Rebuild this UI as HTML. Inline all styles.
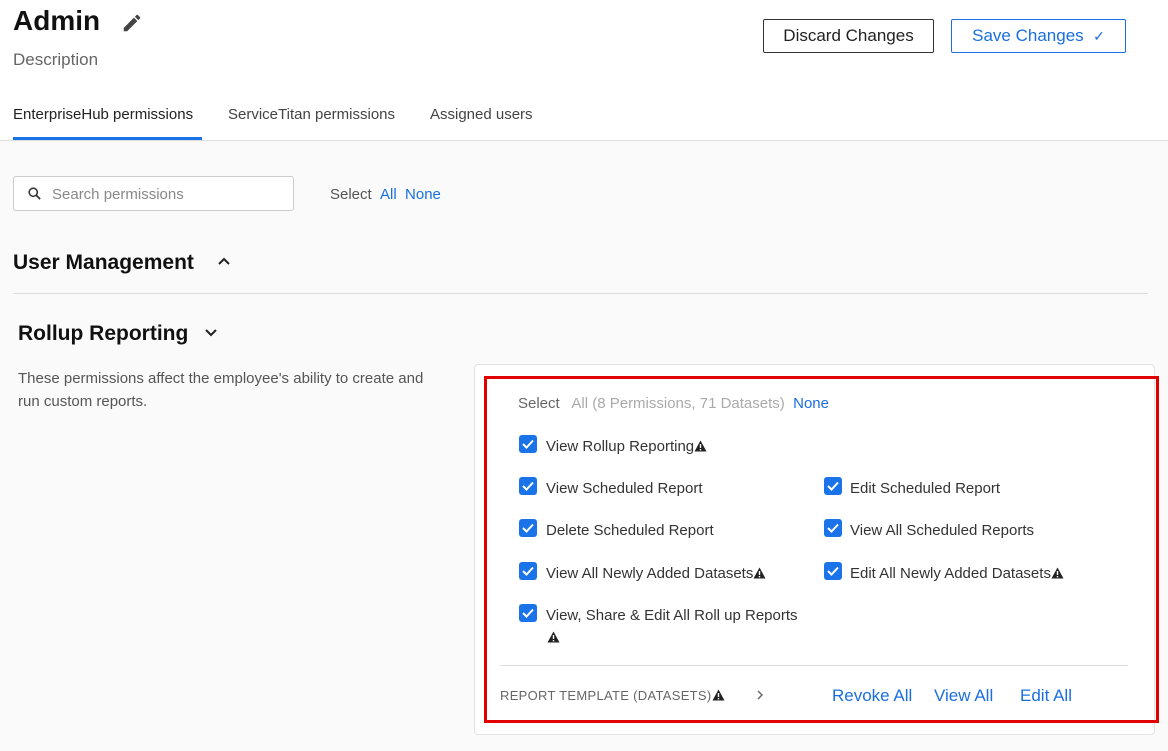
<!DOCTYPE html>
<html><head><style>
*{margin:0;padding:0;box-sizing:border-box}
body{width:1168px;height:751px;overflow:hidden;background:#fafafa;font-family:"Liberation Sans",sans-serif;color:#222;position:relative}
.a{position:absolute;white-space:nowrap}
.top{position:absolute;left:0;top:0;width:1168px;height:141px;background:#fff;border-bottom:1px solid #dcdcdc}
.btn{position:absolute;height:34px;border:1px solid #333;border-radius:2px;font-size:17px;display:flex;align-items:center;justify-content:center;background:#fff}
.cb{position:absolute;width:18px;height:18px;background:#1a73e8;border-radius:3px}
.cb svg{position:absolute;left:2px;top:2px}
.lbl{position:absolute;font-size:15px;color:#333;white-space:nowrap}
.blue{color:#1a6fe0}
.w{display:inline-block;width:13px;height:12px;vertical-align:-1px}
</style></head><body>
<svg width="0" height="0" style="position:absolute"><defs><symbol id="wr" viewBox="0 0 13 12"><path d="M6.5 0.5L12.5 11.5H0.5z" fill="#222"/><rect x="5.8" y="4" width="1.4" height="4" fill="#fff"/><rect x="5.8" y="9" width="1.4" height="1.4" fill="#fff"/></symbol></defs></svg>
<div class="top"></div>
<div class="a" style="left:13px;top:5px;font-size:28px;font-weight:bold;color:#111">Admin</div>
<svg class="a" style="left:121px;top:12px" width="22" height="22" viewBox="0 0 24 24"><path fill="#444" d="M3 17.25V21h3.75L17.81 9.94l-3.75-3.75L3 17.25zM20.71 7.04a1 1 0 000-1.41l-2.34-2.34a1 1 0 00-1.41 0l-1.83 1.83 3.75 3.75 1.83-1.83z"/></svg>
<div class="a" style="left:13px;top:50px;font-size:17px;color:#666">Description</div>
<div class="btn" style="left:763px;top:19px;width:171px;color:#222">Discard Changes</div>
<div class="btn" style="left:951px;top:19px;width:175px;border-color:#1a6fe0;color:#1a6fe0">Save Changes&nbsp;&nbsp;<span style="font-size:14px">✓</span></div>
<div class="a" style="left:13px;top:106px;font-size:15px;color:#222">EnterpriseHub permissions</div>
<div class="a" style="left:13px;top:137px;width:189px;height:3px;background:#1a73e8"></div>
<div class="a" style="left:228px;top:106px;font-size:15px;color:#444">ServiceTitan permissions</div>
<div class="a" style="left:430px;top:106px;font-size:15px;color:#444">Assigned users</div>
<div class="a" style="left:13px;top:176px;width:281px;height:35px;background:#fff;border:1px solid #ccc;border-radius:3px"></div>
<svg class="a" style="left:27px;top:186px" width="15" height="15" viewBox="0 0 24 24"><circle cx="10" cy="10" r="6.5" fill="none" stroke="#333" stroke-width="2.5"/><path d="M15 15l6 6" stroke="#333" stroke-width="2.8"/></svg>
<div class="a" style="left:52px;top:186px;font-size:15px;color:#888">Search permissions</div>
<div class="a" style="left:330px;top:186px;font-size:15px;color:#555">Select <span class="blue">&nbsp;All&nbsp; None</span></div>
<div class="a" style="left:13px;top:251px;font-size:21px;font-weight:bold;color:#111">User Management</div>
<svg class="a" style="left:217px;top:254px" width="14" height="14" viewBox="0 0 14 14"><path d="M2 10l5-5 5 5" fill="none" stroke="#222" stroke-width="2"/></svg>
<div class="a" style="left:13px;top:293px;width:1135px;height:1px;background:#ddd"></div>
<div class="a" style="left:18px;top:322px;font-size:21px;font-weight:bold;color:#111">Rollup Reporting</div>
<svg class="a" style="left:204px;top:325px" width="14" height="14" viewBox="0 0 14 14"><path d="M2 5l5 5 5-5" fill="none" stroke="#222" stroke-width="2"/></svg>
<div class="a" style="left:18px;top:367px;font-size:15px;line-height:23px;color:#555;white-space:normal;width:430px">These permissions affect the employee's ability to create and run custom reports.</div>
<div class="a" style="left:474px;top:364px;width:681px;height:371px;background:#fff;border:1px solid #e3e3e3;border-radius:4px"></div>
<div class="a" style="left:484px;top:376px;width:675px;height:347px;border:3px solid #e00000"></div>
<div class="a" style="left:518px;top:395px;font-size:15px;color:#666">Select&nbsp;&nbsp; <span style="color:#aaa">All (8 Permissions, 71 Datasets)</span>&nbsp; <span class="blue">None</span></div>

<div class="cb" style="left:519px;top:435px"><svg width="14" height="14" viewBox="0 0 14 14"><path d="M2 7l3.5 3.5L12 3.5" fill="none" stroke="#fff" stroke-width="2"/></svg></div>
<div class="lbl" style="left:546px;top:438px">View Rollup Reporting<svg class="w"><use href="#wr"/></svg></div>
<div class="cb" style="left:519px;top:477px"><svg width="14" height="14" viewBox="0 0 14 14"><path d="M2 7l3.5 3.5L12 3.5" fill="none" stroke="#fff" stroke-width="2"/></svg></div>
<div class="lbl" style="left:546px;top:480px">View Scheduled Report</div>
<div class="cb" style="left:824px;top:477px"><svg width="14" height="14" viewBox="0 0 14 14"><path d="M2 7l3.5 3.5L12 3.5" fill="none" stroke="#fff" stroke-width="2"/></svg></div>
<div class="lbl" style="left:850px;top:480px">Edit Scheduled Report</div>
<div class="cb" style="left:519px;top:519px"><svg width="14" height="14" viewBox="0 0 14 14"><path d="M2 7l3.5 3.5L12 3.5" fill="none" stroke="#fff" stroke-width="2"/></svg></div>
<div class="lbl" style="left:546px;top:522px">Delete Scheduled Report</div>
<div class="cb" style="left:824px;top:519px"><svg width="14" height="14" viewBox="0 0 14 14"><path d="M2 7l3.5 3.5L12 3.5" fill="none" stroke="#fff" stroke-width="2"/></svg></div>
<div class="lbl" style="left:850px;top:522px">View All Scheduled Reports</div>
<div class="cb" style="left:519px;top:562px"><svg width="14" height="14" viewBox="0 0 14 14"><path d="M2 7l3.5 3.5L12 3.5" fill="none" stroke="#fff" stroke-width="2"/></svg></div>
<div class="lbl" style="left:546px;top:565px">View All Newly Added Datasets<svg class="w"><use href="#wr"/></svg></div>
<div class="cb" style="left:824px;top:562px"><svg width="14" height="14" viewBox="0 0 14 14"><path d="M2 7l3.5 3.5L12 3.5" fill="none" stroke="#fff" stroke-width="2"/></svg></div>
<div class="lbl" style="left:850px;top:565px">Edit All Newly Added Datasets<svg class="w"><use href="#wr"/></svg></div>
<div class="cb" style="left:519px;top:604px"><svg width="14" height="14" viewBox="0 0 14 14"><path d="M2 7l3.5 3.5L12 3.5" fill="none" stroke="#fff" stroke-width="2"/></svg></div>
<div class="lbl" style="left:546px;top:607px">View, Share &amp; Edit All Roll up Reports</div>
<svg class="a" style="left:547px;top:631px" width="13" height="12"><use href="#wr"/></svg>
<div class="a" style="left:500px;top:665px;width:628px;height:1px;background:#ddd"></div>
<div class="a" style="left:500px;top:688px;font-size:13px;color:#666;letter-spacing:.3px">REPORT TEMPLATE (DATASETS)<svg class="w"><use href="#wr"/></svg></div>
<svg class="a" style="left:755px;top:689px" width="10" height="12" viewBox="0 0 10 12"><path d="M3 2l4 4-4 4" fill="none" stroke="#666" stroke-width="1.5"/></svg>
<div class="a blue" style="left:832px;top:686px;font-size:17px">Revoke All</div>
<div class="a blue" style="left:934px;top:686px;font-size:17px">View All</div>
<div class="a blue" style="left:1020px;top:686px;font-size:17px">Edit All</div>
</body></html>
